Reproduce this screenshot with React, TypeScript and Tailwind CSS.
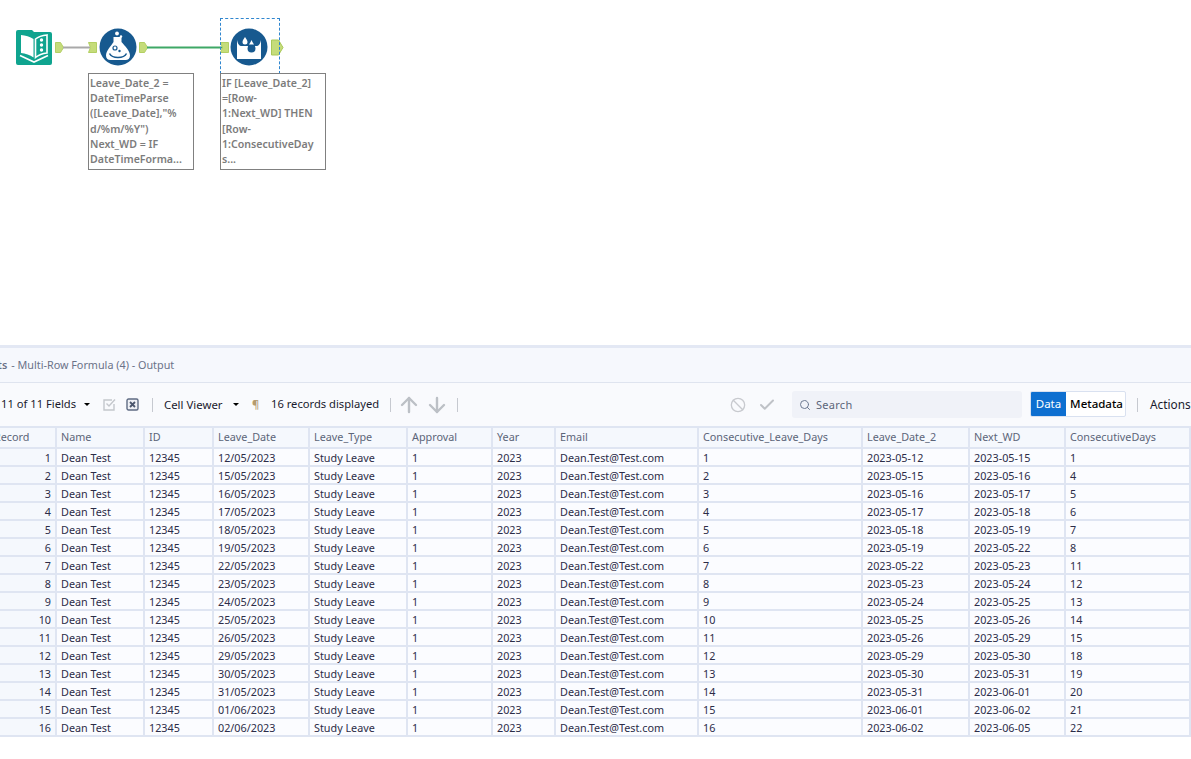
import { ArrowDown, ArrowUp, Ban, Check, Search } from "lucide-react";

const rows = [
  ["12/05/2023", "2023-05-12", "2023-05-15", "1"],
  ["15/05/2023", "2023-05-15", "2023-05-16", "4"],
  ["16/05/2023", "2023-05-16", "2023-05-17", "5"],
  ["17/05/2023", "2023-05-17", "2023-05-18", "6"],
  ["18/05/2023", "2023-05-18", "2023-05-19", "7"],
  ["19/05/2023", "2023-05-19", "2023-05-22", "8"],
  ["22/05/2023", "2023-05-22", "2023-05-23", "11"],
  ["23/05/2023", "2023-05-23", "2023-05-24", "12"],
  ["24/05/2023", "2023-05-24", "2023-05-25", "13"],
  ["25/05/2023", "2023-05-25", "2023-05-26", "14"],
  ["26/05/2023", "2023-05-26", "2023-05-29", "15"],
  ["29/05/2023", "2023-05-29", "2023-05-30", "18"],
  ["30/05/2023", "2023-05-30", "2023-05-31", "19"],
  ["31/05/2023", "2023-05-31", "2023-06-01", "20"],
  ["01/06/2023", "2023-06-01", "2023-06-02", "21"],
  ["02/06/2023", "2023-06-02", "2023-06-05", "22"],
];

const headers = ["Name", "ID", "Leave_Date", "Leave_Type", "Approval", "Year", "Email", "Consecutive_Leave_Days", "Leave_Date_2", "Next_WD", "ConsecutiveDays"];

const Anchor = ({ x, big = false, input = false }: { x: number; big?: boolean; input?: boolean }) => (
  <svg className="absolute" style={{ left: x, top: big ? 39 : 41 }} width={big ? 13 : 9} height={big ? 17 : 13} viewBox={big ? "0 0 13 17" : "0 0 9 13"}>
    {input ? (
      <path d="M0.5 1.5H8.5V11.5H0.5L2.5 6.5Z" fill="#c5dc7a" stroke="#b3cf63" />
    ) : big ? (
      <path d="M0.5 1H7.5L12 8.5L7.5 16H0.5Z" fill="#c5dc7a" stroke="#a9c858" />
    ) : (
      <path d="M0.5 1.5H5.5L8.5 6.5L5.5 11.5H0.5Z" fill="#c5dc7a" stroke="#b3cf63" />
    )}
  </svg>
);

const BookIcon = () => (
  <svg className="absolute left-[16px] top-[30px]" width="36" height="36" viewBox="0 0 36 36">
    <path d="M2 0H16L18 2H34a2 2 0 0 1 2 2V33a2 2 0 0 1-2 2H2a2 2 0 0 1-2-2V2a2 2 0 0 1 2-2Z" fill="#0fa48f" />
    <path d="M17.500 9C14 6.500 9.500 5.500 5 5V23C9.500 23.500 14 25 17.500 27.500Z" fill="#fff" />
    <path d="M19.500 9C22.500 6.500 26 5.500 31 5V23C26 23.500 22.500 25 19.500 27.500Z" fill="none" stroke="#fff" strokeWidth="1.600" />
    <path d="M4 25.500L18 32L32 25.500" fill="none" stroke="#fff" strokeWidth="1.600" />
    <circle cx="25.500" cy="10" r="1.700" fill="#fff" />
    <circle cx="25.500" cy="15" r="1.700" fill="#fff" />
    <circle cx="25.500" cy="20" r="1.700" fill="#fff" />
  </svg>
);

const FlaskIcon = () => (
  <svg className="absolute left-[99px] top-[28px]" width="38" height="38" viewBox="0 0 38 38">
    <circle cx="19" cy="19" r="18.500" fill="#17598f" />
    <circle cx="18" cy="5.500" r="1.900" fill="#fff" />
    <circle cx="22" cy="8.500" r="1.200" fill="#fff" />
    <path d="M14.500 9H22.500V14C26 18 31 23 31 27.500C31 30.500 29 32 26.500 32H11.500C9 32 7 30.500 7 27.500C7 23 12 18 14.500 14Z" fill="#fff" />
    <circle cx="16" cy="20" r="2" fill="none" stroke="#17598f" strokeWidth="1.200" />
    <circle cx="20.500" cy="23" r="1.200" fill="#17598f" />
    <path d="M10.500 25.500C12 28.500 16 29.500 19 29.500C22 29.500 26 28.500 27.500 25.500" stroke="#17598f" strokeWidth="1.500" fill="none" />
  </svg>
);

const MultiRowIcon = () => (
  <svg className="absolute left-[230px] top-[28px]" width="38" height="38" viewBox="0 0 38 38">
    <circle cx="19" cy="19" r="18.500" fill="#17598f" />
    <path d="M7 12C8 16 9 18 12 18H26C29 18 30 16 31 12V31H7Z" fill="#fff" />
    <path d="M15 9C16 11 17.500 12 17.500 14A2.500 2.500 0 0 1 12.500 14C12.500 12 14 11 15 9Z" fill="#fff" />
    <path d="M21.500 12C22.500 15 25.500 17.500 25.500 20.500A4 4 0 0 1 17.500 20.500C17.500 17.500 20.500 15 21.500 12Z" fill="#17598f" />
    <path d="M21.500 12C22 13.500 23 15 24 16.500H19C20 15 21 13.500 21.500 12Z" fill="#fff" />
  </svg>
);

const Note = ({ x, lines }: { x: number; lines: string[] }) => (
  <div className="absolute top-[73px] h-[97px] w-[106px] overflow-hidden border border-[#808080] bg-white px-[1px] pt-[2px] text-[10.6px] leading-[15.2px] font-semibold text-[#7c7c7c]" style={{ left: x }}>
    {lines.map((l) => (
      <div key={l} className="whitespace-pre">{l}</div>
    ))}
  </div>
);

const Caret = () => <span className="inline-block h-0 w-0 border-x-[3px] border-t-[3px] border-x-transparent border-t-black" />;
const Sep = () => <span className="block h-[14px] w-px bg-[#c6c9d0]" />;

const cell = "h-[18px] border-r-2 border-b-2 border-[#dfe5f2] px-[4px] leading-[18px] whitespace-nowrap overflow-hidden";
const head = "h-[23px] border-r-2 border-b-2 border-t-2 border-[#dfe5f2] bg-[#f5f8fd] px-[4px] leading-[17px] text-[#5c6579] whitespace-nowrap overflow-hidden";

export default function App() {
  return (
    <div className="h-[759px] w-[1191px] overflow-hidden bg-white font-['Noto_Sans',sans-serif] text-[10.8px] text-[#2c2c48]">
      <div className="relative h-[345px]">
        <BookIcon />
        <Anchor x={55} />
        <svg className="absolute left-[63px] top-[46px]" width="27" height="3"><rect width="27" height="2" y="0.5" fill="#a9a9a9" /></svg>
        <Anchor x={88} input />
        <FlaskIcon />
        <Anchor x={139} />
        <svg className="absolute left-[147px] top-[46px]" width="76" height="3"><rect width="76" height="2" y="0.5" fill="#3fa866" /></svg>
        <Anchor x={220} input />
        <MultiRowIcon />
        <Anchor x={271} big />
        <div className="absolute left-[220px] top-[18px] h-[56px] w-[60px] border border-dashed border-[#2f86cf]" />
        <Note x={88} lines={["Leave_Date_2 =", "DateTimeParse", '([Leave_Date],"%', 'd/%m/%Y")', "Next_WD = IF", "DateTimeForma..."]} />
        <Note x={220} lines={["IF [Leave_Date_2]", "=[Row-", "1:Next_WD] THEN", "[Row-", "1:ConsecutiveDay", "s..."]} />
      </div>

      <div className="h-[3px] bg-[#e3e8f4]" />
      <div className="flex h-[35px] items-center border-b border-[#dfe4ef] bg-[#f6f8fd] pt-[1px] text-[#6a7288] whitespace-nowrap">
        <span className="-ml-[31px] font-semibold">Results</span>
        <span className="ml-[4px]">- Multi-Row Formula (4) - Output</span>
      </div>
      <div className="flex h-[43px] items-center whitespace-nowrap bg-[#f9fafd] text-[11px] text-[#1a1a2e]">
        <span className="ml-[1px] w-[75px] shrink-0 text-[11.200px]">11 of 11 Fields</span>
        <span className="ml-[8px] flex shrink-0"><Caret /></span>
        <svg className="ml-[13px] shrink-0" width="13" height="13" viewBox="0 0 13 13"><path d="M11 6V12H1V2H9" fill="none" stroke="#c4c7cc" strokeWidth="1.400" /><path d="M3.500 5.500L6 8L12 1.500" fill="none" stroke="#c4c7cc" strokeWidth="1.400" /></svg>
        <svg className="ml-[10px] shrink-0" width="13" height="13" viewBox="0 0 13 13"><rect x="1" y="1" width="11" height="11" rx="1.500" fill="#eef0f5" stroke="#5f6b83" strokeWidth="1.400" /><path d="M4 4L9 9M9 4L4 9" stroke="#4a556c" strokeWidth="1.800" /></svg>
        <span className="ml-[13px] shrink-0"><Sep /></span>
        <span className="ml-[11px] w-[59px] shrink-0 text-[11.400px]">Cell Viewer</span>
        <span className="ml-[10px] flex shrink-0"><Caret /></span>
        <span className="ml-[13px] w-[7px] shrink-0 font-semibold text-[#b59b6f]">¶</span>
        <span className="ml-[12px] w-[108px] shrink-0 text-[11.200px]">16 records displayed</span>
        <span className="ml-[11px] shrink-0"><Sep /></span>
        <ArrowUp className="ml-[6px] shrink-0" size={24} color="#bcc0c6" strokeWidth={2.400} />
        <ArrowDown className="ml-[4px] shrink-0" size={24} color="#bcc0c6" strokeWidth={2.400} />
        <span className="ml-[8px] shrink-0"><Sep /></span>
        <Ban className="ml-[272px] shrink-0" size={16} color="#c8cacf" strokeWidth={2} />
        <Check className="ml-[12px] shrink-0" size={18} color="#bfc2c7" strokeWidth={2.600} />
        <div className="ml-[16px] flex h-[27px] w-[230px] shrink-0 items-center rounded-[3px] bg-[#f0f2f8] pl-[7px] pt-[1px] text-[11px] text-[#5c6579]">
          <Search size={12} color="#6d7a92" />
          <span className="ml-[5px] tracking-wide">Search</span>
        </div>
        <div className="mb-[1px] ml-[8px] flex h-[26px] w-[96px] shrink-0 overflow-hidden rounded-[2px] border border-[#d9e1f0] bg-white text-[11.500px]">
          <span className="flex w-[35px] items-center justify-center bg-[#0e6fd0] text-white">Data</span>
          <span className="flex flex-1 items-center justify-center pl-[2px] font-medium text-black">Metadata</span>
        </div>
        <span className="ml-[11px] shrink-0"><Sep /></span>
        <span className="ml-[12px] shrink-0 text-[11.800px]">Actions</span>
      </div>

      <div className="grid grid-cols-[57px_88px_69px_96px_98px_85px_63px_143px_164px_107px_96px_125px]">
        <div className={head}><span className="-ml-[10px] inline-block">Record</span></div>
        {headers.map((h) => (
          <div key={h} className={head}>{h}</div>
        ))}
        {rows.map((r, i) => (
          <div key={r[0]} className="contents">
            <div className={cell + " bg-[#f5f8fd] text-right"}>{i + 1}</div>
            {["Dean Test", "12345", r[0], "Study Leave", "1", "2023", "Dean.Test@Test.com", String(i + 1), r[1], r[2], r[3]].map((v, j) => (
              <div key={j} className={cell + " bg-[#fbfcff]"}>{v}</div>
            ))}
          </div>
        ))}
      </div>
    </div>
  );
}
